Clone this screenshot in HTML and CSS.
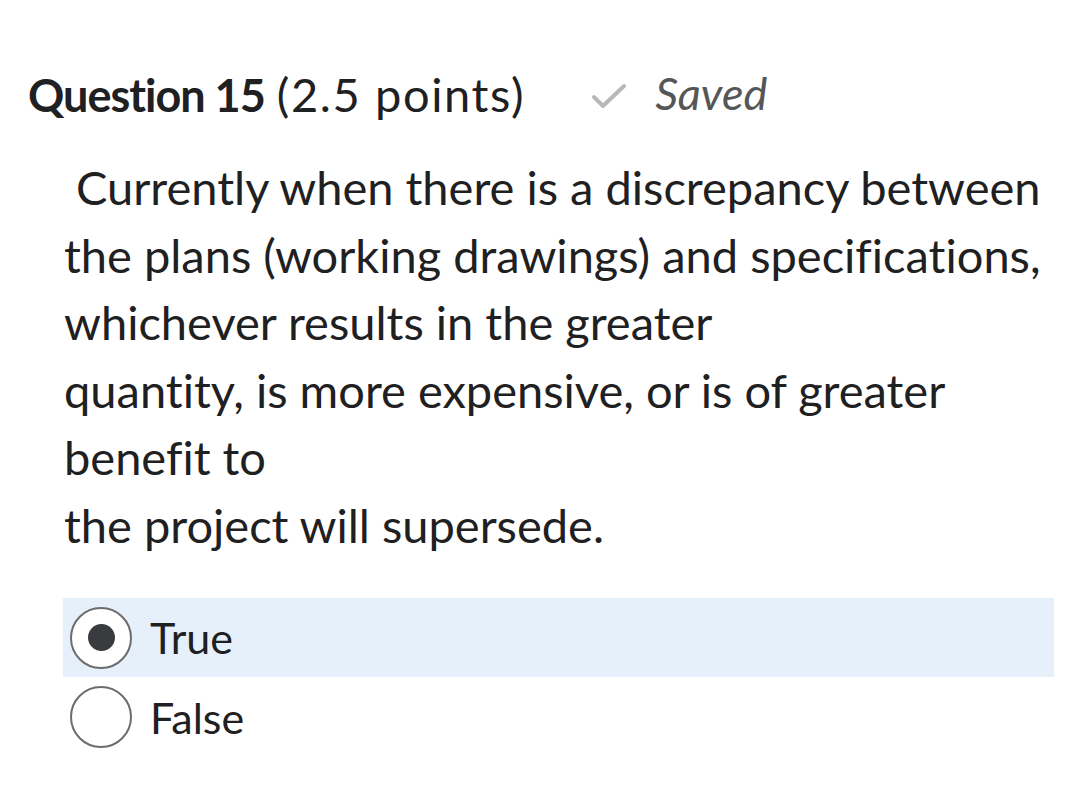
FILE: index.html
```html
<!DOCTYPE html>
<html>
<head>
<meta charset="utf-8">
<link rel="stylesheet" href="styles.css">
</head>
<body>
<div class="question">
  <div class="header">
    <h2 class="title"><span class="qnum">Question 15</span> <span class="points">(2.5 points)</span></h2>
    <div class="saved">
      <svg class="check" width="36" height="26" viewBox="0 0 36 26"><path d="M3 14 L12 23 L33 3" fill="none" stroke="#b8b8b8" stroke-width="4" stroke-linecap="round" stroke-linejoin="round"/></svg>
      <span>Saved</span>
    </div>
  </div>
  <p class="stem">&nbsp;Currently when there is a discrepancy between the plans (working drawings) and specifications, whichever results in the greater<br>quantity, is more expensive, or is of greater<br>benefit to<br>the project will supersede.</p>
  <div class="options">
    <label class="option selected"><span class="radio checked"></span><span class="label">True</span></label>
    <label class="option"><span class="radio"></span><span class="label">False</span></label>
  </div>
</div>
</body>
</html>
```
FILE: styles.css
```css
html, body {
  margin: 0;
  padding: 0;
  background: #ffffff;
}
body {
  font-family: Lato, "Liberation Sans", sans-serif;
  color: #1f2021;
  font-variant-ligatures: none;
}
.question {
  padding: 66px 22px 0 28px;
}
.header {
  display: flex;
  align-items: center;
  gap: 66px;
}
.title {
  margin: 0;
  font-size: 47px;
  font-weight: 400;
  line-height: 56px;
  color: #1f2021;
  white-space: nowrap;
}
.qnum {
  font-weight: 700;
  font-size: 45px;
  letter-spacing: -1px;
}
.points {
  letter-spacing: 1.6px;
}
.saved {
  display: flex;
  align-items: center;
  gap: 28px;
  font-style: italic;
  font-size: 45px;
  color: #555657;
  margin-top: -4px;
}
.check {
  display: block;
  margin-top: 6px;
}
.stem {
  margin: 31px 0 0 36px;
  font-size: 47px;
  letter-spacing: 0;
  line-height: 67.5px;
  color: #1f2021;
}
.options {
  margin: 39px 0 0 35px;
  display: flex;
  flex-direction: column;
}
.option {
  display: flex;
  align-items: center;
  gap: 18px;
  height: 80px;
  padding-left: 7px;
}
.option.selected {
  background: #e5f0fb;
  height: 79px;
}
.radio {
  width: 58px;
  height: 58px;
  border: 2px solid #6c6c6c;
  border-radius: 50%;
  background: #fff;
  display: flex;
  align-items: center;
  justify-content: center;
  box-sizing: content-box;
}
.radio.checked::after {
  content: "";
  width: 27px;
  height: 27px;
  border-radius: 50%;
  background: #393b3e;
}
.label {
  font-size: 43px;
  color: #1f2021;
}
```
